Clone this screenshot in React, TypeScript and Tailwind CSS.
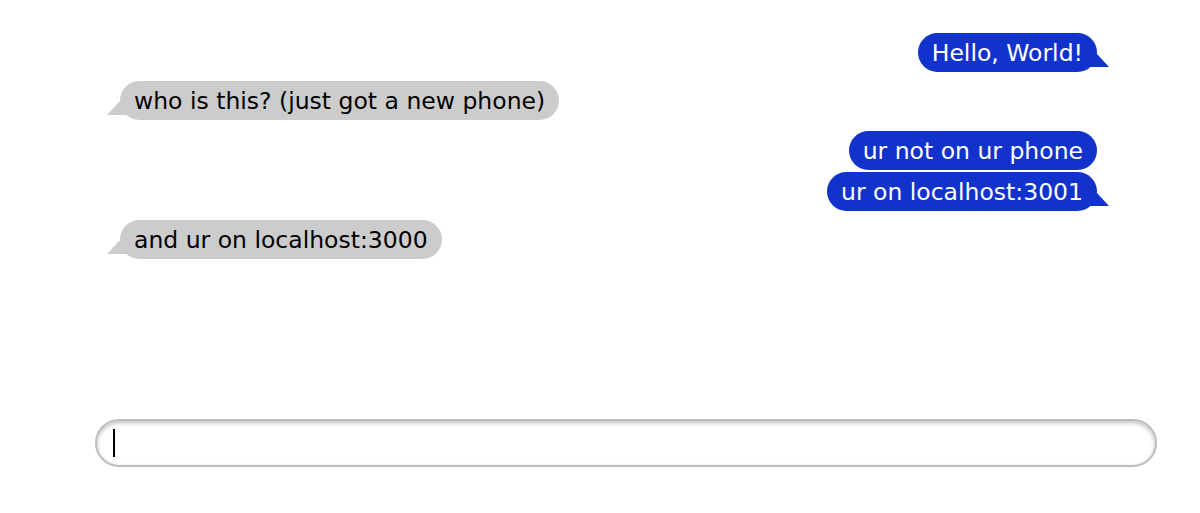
import React from "react";

type Msg = { text: string; me: boolean; tail: boolean; gap: string };

const msgs: Msg[] = [
  { text: "Hello, World!", me: true, tail: true, gap: "mt-0" },
  { text: "who is this? (just got a new phone)", me: false, tail: true, gap: "mt-[9px]" },
  { text: "ur not on ur phone", me: true, tail: false, gap: "mt-[11px]" },
  { text: "ur on localhost:3001", me: true, tail: true, gap: "mt-[2px]" },
  { text: "and ur on localhost:3000", me: false, tail: true, gap: "mt-[9px]" },
];

function Bubble({ m }: { m: Msg }) {
  return (
    <div className={`flex ${m.me ? "justify-end" : "justify-start"} ${m.gap}`}>
      <div
        className={`relative h-[39px] px-[14px] rounded-[20px] flex items-center text-[23.5px] leading-none ${
          m.me ? "bg-[#1133cc] text-white" : "bg-[#cccccc] text-black"
        }`}
      >
        <span className="pt-[2px]">{m.text}</span>
        {m.tail &&
          (m.me ? (
            <svg className="absolute right-[-12px] bottom-[4px]" width="20" height="14" viewBox="0 0 20 14">
              <path d="M0 0 L8 0 L20 13 L0 13 Z" fill="#1133cc" />
            </svg>
          ) : (
            <svg className="absolute left-[-13px] bottom-[4px]" width="20" height="14" viewBox="0 0 20 14">
              <path d="M20 0 L12 0 L0 13 L20 13 Z" fill="#cccccc" />
            </svg>
          ))}
      </div>
    </div>
  );
}

export default function App() {
  return (
    <div
      className="w-[1200px] h-[513px] bg-white overflow-hidden"
      style={{ fontFamily: '"DejaVu Sans", Verdana, sans-serif' }}
    >
      <div className="pt-[33px] pl-[120px] pr-[103px]">
        {msgs.map((m, i) => (
          <Bubble key={i} m={m} />
        ))}
      </div>
      <div className="pl-[95px] pr-[43px] mt-[160px]">
        <div className="h-[48px] rounded-[24px] border-2 border-[#bdbdbd] bg-white shadow-[inset_0_2px_4px_rgba(0,0,0,0.25)] flex items-center pl-[16px]">
          <div className="w-[2px] h-[28px] bg-black" />
        </div>
      </div>
    </div>
  );
}
